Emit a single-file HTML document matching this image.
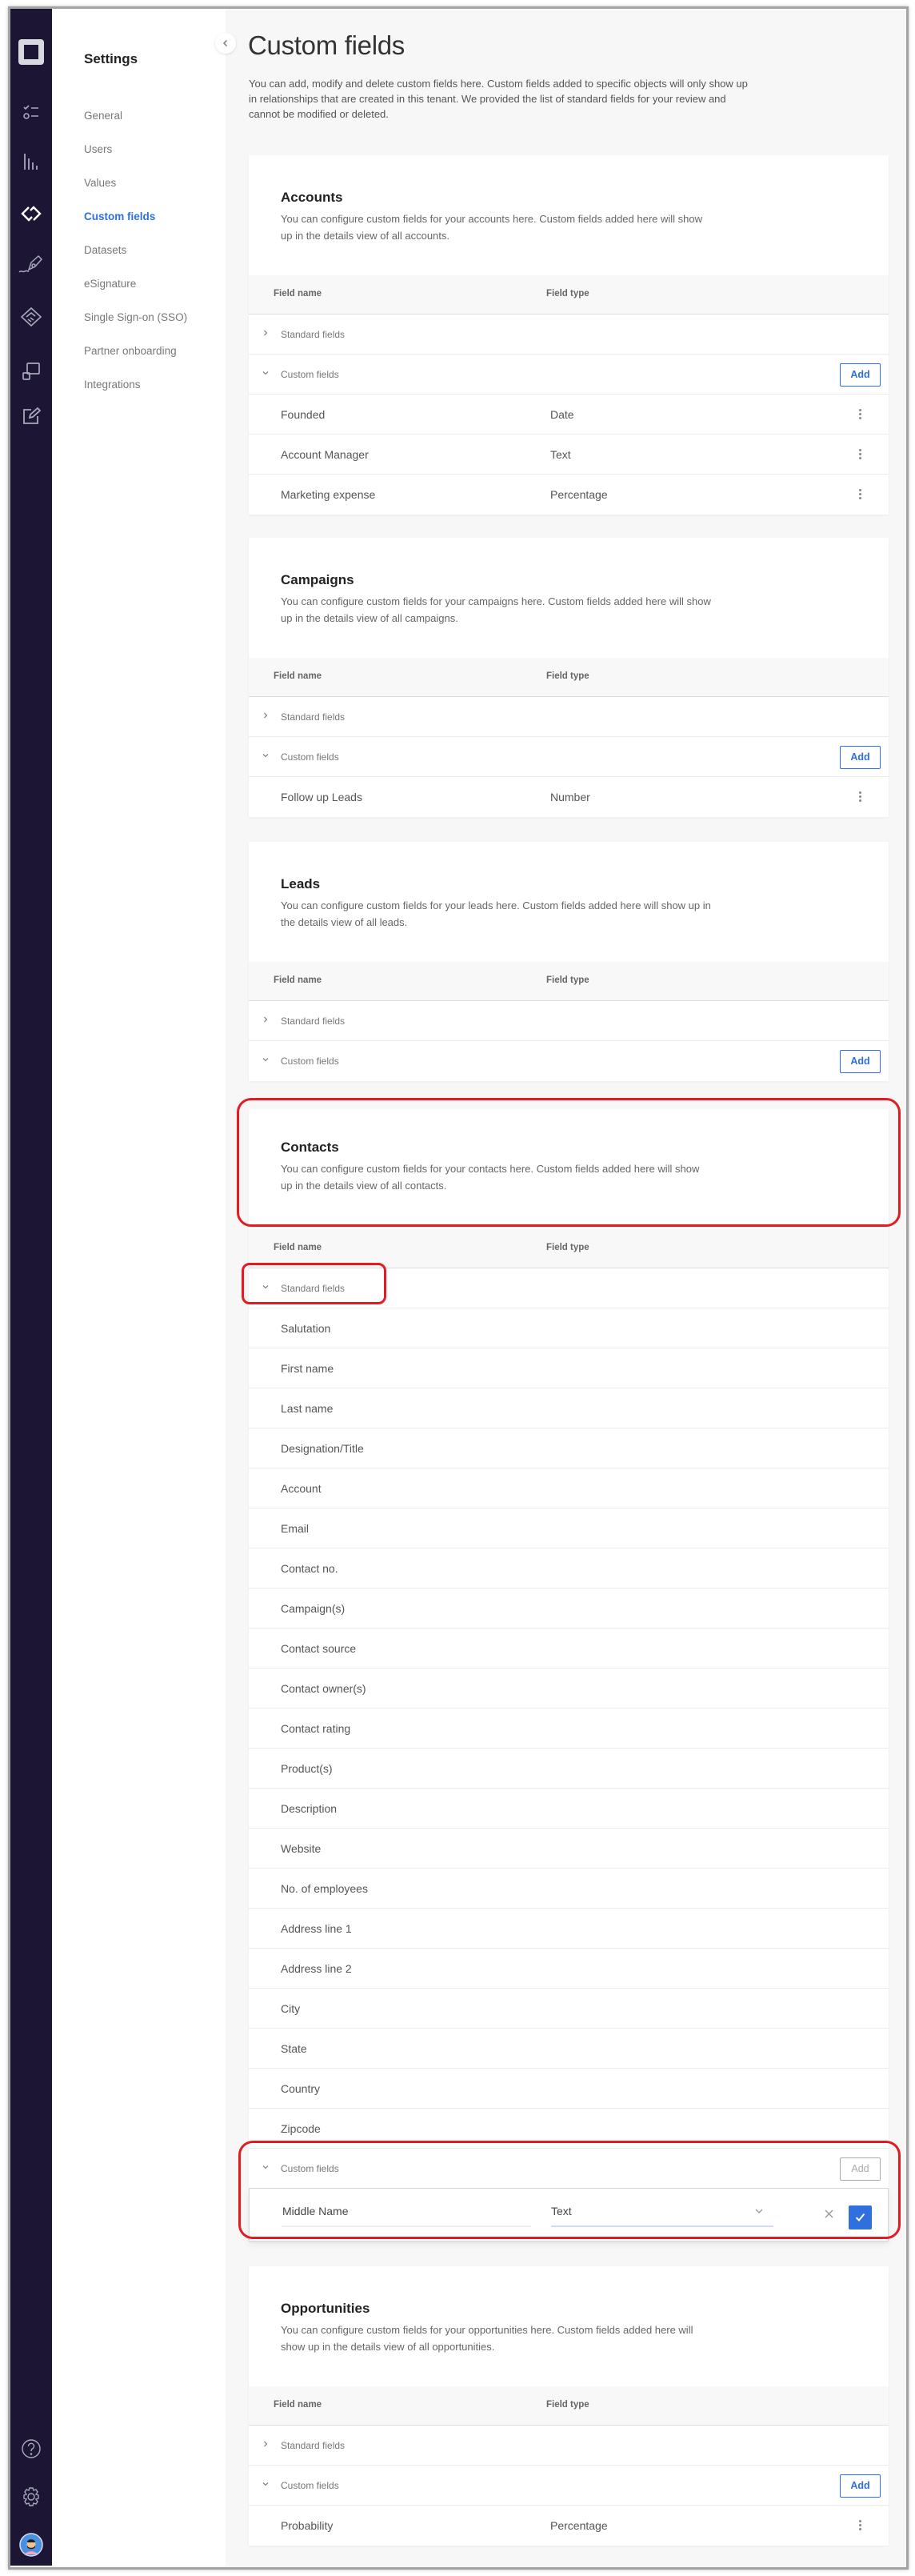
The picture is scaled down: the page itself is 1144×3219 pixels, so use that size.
<!DOCTYPE html>
<html><head><meta charset="utf-8">
<style>
*{box-sizing:border-box;margin:0;padding:0}
body{width:1144px;height:3219px;background:#fff;font-family:"Liberation Sans",sans-serif;position:relative;overflow:hidden}
.frame{position:absolute;left:10px;top:8px;width:1126px;height:3203px;border:3px solid #a4a4a4;background:#f7f7f7;box-shadow:0 0 4px rgba(0,0,0,.25)}
.side{position:absolute;left:13px;top:11px;width:52px;height:3195px;background:#1c1634}
.panel{position:absolute;left:65px;top:11px;width:217px;height:3195px;background:#fff}
.abs{position:absolute}
.menu{position:absolute;left:105px;font-size:13.5px;color:#777}
.card{position:absolute;left:311px;width:800px;background:#fff;box-shadow:0 1px 3px rgba(0,0,0,.05)}
.ch{height:150px;padding:43px 0 0 40px}
.ch h3{font-size:17px;font-weight:bold;color:#222;line-height:20px}
.ch p{font-size:13px;color:#666;line-height:21px;margin-top:6px;width:540px}
.th{height:49px;background:#f8f8f8;border-bottom:1px solid #dcdcdc;position:relative;font-size:11.5px;font-weight:bold;color:#666}
.th span{position:absolute;top:17px}
.r{height:50px;border-bottom:1px solid #ececec;position:relative;font-size:14px;color:#555}
.r span{position:absolute;top:17px}
.g{font-size:12px;color:#777}
.g span{top:18px}
.chev{position:absolute;left:17px;top:19px;width:8px;height:8px}
.add{position:absolute;left:739px;top:11px;width:51px;height:29px;border:1px solid #2f6fde;border-radius:2px;color:#2f6fde;font-weight:bold;font-size:12.5px;text-align:center;line-height:27px}
.keb{position:absolute;left:763px;top:18px;width:4px}
.keb i{display:block;width:3px;height:3px;border-radius:50%;background:#888;margin-bottom:2px}
.red{position:absolute;border:3px solid #e31b23;border-radius:18px}
</style></head><body>
<div class="frame"></div>
<div class="side"></div>
<div class="panel"></div>

<svg class="abs" style="left:22px;top:48px" width="34" height="34" viewBox="0 0 34 34"><rect x="1" y="1" width="32" height="32" rx="4" fill="#d8d8e0"/><rect x="8" y="8" width="18" height="18" fill="#1c1634"/></svg>
<svg class="abs" style="left:27px;top:128px" width="24" height="24" viewBox="0 0 24 24" fill="none" stroke="#a8a8bc" stroke-width="1.6"><circle cx="6" cy="17" r="3"/><path d="M3 6l2 2 4-4M12 7h9M12 17h9"/></svg>
<svg class="abs" style="left:27px;top:190px" width="24" height="24" viewBox="0 0 24 24" fill="none" stroke="#a8a8bc" stroke-width="1.8"><path d="M4 2v20M9 8v14M14 13v9M19 17v5"/></svg>
<svg class="abs" style="left:24px;top:255px" width="30" height="24" viewBox="0 0 30 24" fill="none" stroke="#fff" stroke-width="2.4"><path d="M12 4L4 12l8 8 4-4M18 20l8-8-8-8-4 4"/></svg>
<svg class="abs" style="left:22px;top:315px" width="34" height="28" viewBox="0 0 34 28" fill="none" stroke="#a8a8bc" stroke-width="1.5"><path d="M2 25c3-3 4 1 7-1s3 1 5 0M14 22l3-9 9-8 4 4-8 9zM20 15a2 2 0 1 0 0.1 0"/></svg>
<svg class="abs" style="left:24px;top:383px" width="30" height="26" viewBox="0 0 30 26" fill="none" stroke="#a8a8bc" stroke-width="1.6"><path d="M15 2L3 13l12 11 12-11zM9 13l6-5 5 4M11 16l4 3M14 14l4 3"/></svg>
<svg class="abs" style="left:27px;top:452px" width="24" height="24" viewBox="0 0 24 24" fill="none" stroke="#a8a8bc" stroke-width="1.7"><rect x="7" y="2" width="15" height="13" rx="1"/><rect x="2" y="14" width="8" height="8" rx="1"/></svg>
<svg class="abs" style="left:27px;top:508px" width="24" height="24" viewBox="0 0 24 24" fill="none" stroke="#a8a8bc" stroke-width="1.8"><path d="M12 4H3v17h17v-9M10 14l1-4 9-8 3 3-9 8z"/></svg>
<svg class="abs" style="left:26px;top:3047px" width="26" height="26" viewBox="0 0 26 26" fill="none" stroke="#a8a8bc" stroke-width="1.4"><circle cx="13" cy="13" r="11"/><path d="M9.5 10a3.5 3.5 0 1 1 5 3c-1.5 1-1.5 2-1.5 3"/><circle cx="13" cy="19.5" r=".6" fill="#a8a8bc"/></svg>
<svg class="abs" style="left:26px;top:3107px" width="26" height="26" viewBox="0 0 26 26" fill="none" stroke="#a8a8bc" stroke-width="1.4"><circle cx="13" cy="13" r="4"/><path d="M11 2h4l1 3 3-1 2 3-2 3 3 1v4l-3 1 2 3-2 3-3-1-1 3h-4l-1-3-3 1-2-3 2-3-3-1v-4l3-1-2-3 2-3 3 1z"/></svg>
<svg class="abs" style="left:24px;top:3165px" width="30" height="30" viewBox="0 0 30 30"><circle cx="15" cy="15" r="14" fill="#4a90e2" stroke="#dde" stroke-width="1.5"/><path d="M7 27c2-5 14-5 16 0z" fill="#f4a6c0"/><circle cx="15" cy="14" r="5.5" fill="#f1c08f"/><path d="M10 15c0 5 10 5 10 0v3c-2 3-8 3-10 0z" fill="#222"/><path d="M10 12c0-5 10-5 10 0z" fill="#222"/></svg>

<div class="abs" style="left:105px;top:64px;font-size:17px;font-weight:bold;color:#222">Settings</div>
<div class="menu" style="top:137px">General</div>
<div class="menu" style="top:179px">Users</div>
<div class="menu" style="top:221px">Values</div>
<div class="menu" style="top:263px;color:#2f6fde;font-weight:bold">Custom fields</div>
<div class="menu" style="top:305px">Datasets</div>
<div class="menu" style="top:347px">eSignature</div>
<div class="menu" style="top:389px">Single Sign-on (SSO)</div>
<div class="menu" style="top:431px">Partner onboarding</div>
<div class="menu" style="top:473px">Integrations</div>
<div class="abs" style="left:269px;top:41px;width:26px;height:26px;border-radius:50%;background:#fff;box-shadow:0 1px 3px rgba(0,0,0,.12)"></div>
<svg class="abs" style="left:277px;top:49px" width="10" height="10" viewBox="0 0 10 10" fill="none" stroke="#888" stroke-width="1.6"><path d="M6.5 1.5L3 5l3.5 3.5"/></svg>

<div class="abs" style="left:310px;top:38px;font-size:33px;color:#333;font-weight:normal;letter-spacing:-.3px">Custom fields</div>
<div class="abs" style="left:311px;top:95px;width:632px;font-size:13px;line-height:19px;color:#555">You can add, modify and delete custom fields here. Custom fields added to specific objects will only show up in relationships that are created in this tenant. We provided the list of standard fields for your review and cannot be modified or deleted.</div>

<div class="card" style="top:194px">
<div class="ch"><h3>Accounts</h3><p>You can configure custom fields for your accounts here. Custom fields added here will show up in the details view of all accounts.</p></div>
<div class="th"><span style="left:31px">Field name</span><span style="left:372px">Field type</span></div>
<div class="r g"><svg class="chev" viewBox="0 0 8 8" fill="none" stroke="#888" stroke-width="1.3"><path d="M2.5 1l3 3-3 3"/></svg><span style="left:40px">Standard fields</span></div>
<div class="r g"><svg class="chev" viewBox="0 0 8 8" fill="none" stroke="#888" stroke-width="1.3"><path d="M1 2.5l3 3 3-3"/></svg><span style="left:40px">Custom fields</span><div class="add">Add</div></div>
<div class="r"><span style="left:40px">Founded</span><span style="left:377px">Date</span><div class="keb"><i></i><i></i><i></i></div></div>
<div class="r"><span style="left:40px">Account Manager</span><span style="left:377px">Text</span><div class="keb"><i></i><i></i><i></i></div></div>
<div class="r" style="border:0"><span style="left:40px">Marketing expense</span><span style="left:377px">Percentage</span><div class="keb"><i></i><i></i><i></i></div></div>
</div>

<div class="card" style="top:672px">
<div class="ch"><h3>Campaigns</h3><p>You can configure custom fields for your campaigns here. Custom fields added here will show up in the details view of all campaigns.</p></div>
<div class="th"><span style="left:31px">Field name</span><span style="left:372px">Field type</span></div>
<div class="r g"><svg class="chev" viewBox="0 0 8 8" fill="none" stroke="#888" stroke-width="1.3"><path d="M2.5 1l3 3-3 3"/></svg><span style="left:40px">Standard fields</span></div>
<div class="r g"><svg class="chev" viewBox="0 0 8 8" fill="none" stroke="#888" stroke-width="1.3"><path d="M1 2.5l3 3 3-3"/></svg><span style="left:40px">Custom fields</span><div class="add">Add</div></div>
<div class="r" style="border:0"><span style="left:40px">Follow up Leads</span><span style="left:377px">Number</span><div class="keb"><i></i><i></i><i></i></div></div>
</div>

<div class="card" style="top:1052px">
<div class="ch"><h3>Leads</h3><p>You can configure custom fields for your leads here. Custom fields added here will show up in the details view of all leads.</p></div>
<div class="th"><span style="left:31px">Field name</span><span style="left:372px">Field type</span></div>
<div class="r g"><svg class="chev" viewBox="0 0 8 8" fill="none" stroke="#888" stroke-width="1.3"><path d="M2.5 1l3 3-3 3"/></svg><span style="left:40px">Standard fields</span></div>
<div class="r g" style="border:0"><svg class="chev" viewBox="0 0 8 8" fill="none" stroke="#888" stroke-width="1.3"><path d="M1 2.5l3 3 3-3"/></svg><span style="left:40px">Custom fields</span><div class="add">Add</div></div>
</div>

<div class="card" style="top:1386px">
<div class="ch" style="padding-top:38px"><h3>Contacts</h3><p>You can configure custom fields for your contacts here. Custom fields added here will show up in the details view of all contacts.</p></div>
<div class="th"><span style="left:31px">Field name</span><span style="left:372px">Field type</span></div>
<div class="r g"><svg class="chev" viewBox="0 0 8 8" fill="none" stroke="#888" stroke-width="1.3"><path d="M1 2.5l3 3 3-3"/></svg><span style="left:40px">Standard fields</span></div>
<div class="r"><span style="left:40px">Salutation</span></div>
<div class="r"><span style="left:40px">First name</span></div>
<div class="r"><span style="left:40px">Last name</span></div>
<div class="r"><span style="left:40px">Designation/Title</span></div>
<div class="r"><span style="left:40px">Account</span></div>
<div class="r"><span style="left:40px">Email</span></div>
<div class="r"><span style="left:40px">Contact no.</span></div>
<div class="r"><span style="left:40px">Campaign(s)</span></div>
<div class="r"><span style="left:40px">Contact source</span></div>
<div class="r"><span style="left:40px">Contact owner(s)</span></div>
<div class="r"><span style="left:40px">Contact rating</span></div>
<div class="r"><span style="left:40px">Product(s)</span></div>
<div class="r"><span style="left:40px">Description</span></div>
<div class="r"><span style="left:40px">Website</span></div>
<div class="r"><span style="left:40px">No. of employees</span></div>
<div class="r"><span style="left:40px">Address line 1</span></div>
<div class="r"><span style="left:40px">Address line 2</span></div>
<div class="r"><span style="left:40px">City</span></div>
<div class="r"><span style="left:40px">State</span></div>
<div class="r"><span style="left:40px">Country</span></div>
<div class="r"><span style="left:40px">Zipcode</span></div>
<div class="r g" style="border-bottom:1px solid #d8d8d8"><svg class="chev" viewBox="0 0 8 8" fill="none" stroke="#888" stroke-width="1.3"><path d="M1 2.5l3 3 3-3"/></svg><span style="left:40px">Custom fields</span><div class="add" style="border-color:#aaa;color:#aaa;font-weight:normal">Add</div></div>
<div style="height:66px;position:relative;border:1px solid #d8d8d8;border-top:0;box-shadow:0 4px 8px rgba(0,0,0,.06)">
 <div class="abs" style="left:41px;top:20px;font-size:14px;color:#444">Middle Name</div>
 <div class="abs" style="left:40px;top:46px;width:312px;height:2px;background:#eee"></div>
 <div class="abs" style="left:377px;top:20px;font-size:14px;color:#444">Text</div>
 <svg class="abs" style="left:632px;top:24px" width="10" height="8" viewBox="0 0 10 8" fill="none" stroke="#999" stroke-width="1.3"><path d="M1 2l4 4 4-4"/></svg>
 <div class="abs" style="left:377px;top:46px;width:278px;height:2px;background:#d0dcf2"></div>
 <svg class="abs" style="left:719px;top:26px" width="11" height="11" viewBox="0 0 11 11" stroke="#999" stroke-width="1.4"><path d="M1 1l9 9M10 1l-9 9"/></svg>
 <div class="abs" style="left:749px;top:21px;width:29px;height:30px;background:#2f6fde;border-radius:2px"></div>
 <svg class="abs" style="left:757px;top:30px" width="13" height="11" viewBox="0 0 13 11" fill="none" stroke="#fff" stroke-width="2"><path d="M1.5 6l3.5 3.5 6.5-8"/></svg>
</div>
</div>

<div class="card" style="top:2832px">
<div class="ch"><h3>Opportunities</h3><p>You can configure custom fields for your opportunities here. Custom fields added here will show up in the details view of all opportunities.</p></div>
<div class="th"><span style="left:31px">Field name</span><span style="left:372px">Field type</span></div>
<div class="r g"><svg class="chev" viewBox="0 0 8 8" fill="none" stroke="#888" stroke-width="1.3"><path d="M2.5 1l3 3-3 3"/></svg><span style="left:40px">Standard fields</span></div>
<div class="r g"><svg class="chev" viewBox="0 0 8 8" fill="none" stroke="#888" stroke-width="1.3"><path d="M1 2.5l3 3 3-3"/></svg><span style="left:40px">Custom fields</span><div class="add">Add</div></div>
<div class="r" style="border:0"><span style="left:40px">Probability</span><span style="left:377px">Percentage</span><div class="keb"><i></i><i></i><i></i></div></div>
</div>

<div class="red" style="left:296px;top:1372px;width:830px;height:161px"></div>
<div class="red" style="left:302px;top:1578px;width:181px;height:52px;border-radius:10px"></div>
<div class="red" style="left:298px;top:2675px;width:828px;height:123px"></div>
</body></html>
